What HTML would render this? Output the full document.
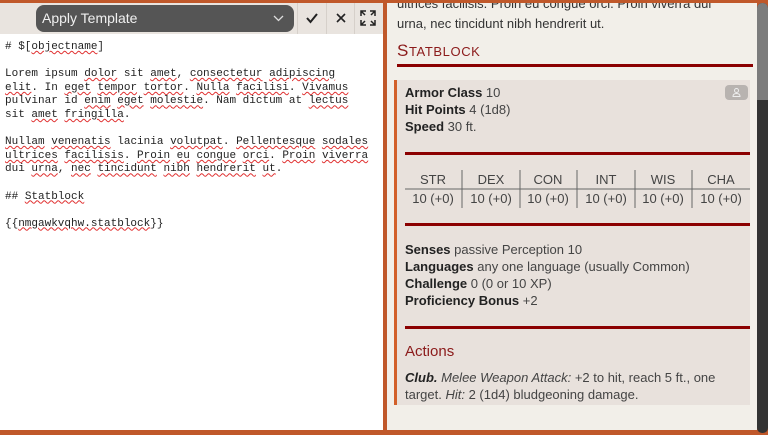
<!DOCTYPE html>
<html><head><meta charset="utf-8"><style>
*{margin:0;padding:0;box-sizing:border-box}
body{width:768px;height:435px;overflow:hidden;background:#c0582a;position:relative;font-family:"Liberation Sans",sans-serif}
.left{position:absolute;left:0;top:3px;width:383px;height:427px;background:#fff}
.tb{position:absolute;left:0;top:0;width:383px;height:31px;background:#e9e4df}
.sel{position:absolute;left:36px;top:2px;width:258px;height:27px;background:#555;border-radius:8px;color:#f0f0f0;font-size:14px;line-height:27px;padding-left:6px}
.btn{position:absolute;top:0;height:31px;width:28px;border-left:1px solid #d6d0ca}
.btn svg{position:absolute;left:7px;top:8px}
.code{position:absolute;left:5px;top:38px;font-family:"Liberation Mono",monospace;font-size:11px;line-height:13.6px;color:#222;white-space:pre}
.u{text-decoration:underline wavy #e03030;text-decoration-thickness:1px;text-underline-offset:1px}
.right{position:absolute;left:387px;top:3px;width:370px;height:427px;background:#f2efe9;overflow:hidden}
.sb{position:absolute;left:757px;top:3px;width:11px;height:430px;background:#333;border-radius:5px}
.sbt{position:absolute;left:757px;top:3px;width:11px;height:97px;background:#7c7c7c;border-radius:5px 5px 0 0}
.p{position:absolute;left:10px;color:#333;font-size:13px;line-height:17px}
.sc{position:absolute;left:394px;top:80px;width:356px;height:325px;background:#e8e1dc;border-left:3px solid #d2602a}
.red{position:absolute;height:3px;background:#8b0000}
.t{position:absolute;font-size:13px;color:#444;line-height:17px}
b{color:#222}
</style></head><body>
<div class="left">
 <div class="tb">
  <div class="sel">Apply Template<svg style="position:absolute;right:10px;top:10px" width="11" height="7"><path d="M1 1 L5.5 5.5 L10 1" fill="none" stroke="#ddd" stroke-width="1.3"/></svg></div>
  <div class="btn" style="left:297px"><svg width="14" height="14"><path d="M2 7 L5.5 11 L12 3" fill="none" stroke="#222" stroke-width="2"/></svg></div>
  <div class="btn" style="left:326px"><svg width="14" height="14"><path d="M3 3 L11 11 M11 3 L3 11" fill="none" stroke="#222" stroke-width="1.6"/></svg></div>
  <div class="btn" style="left:354px"><svg width="16" height="16" style="left:5px;top:7px"><g fill="none" stroke="#222" stroke-width="1.5"><path d="M1 6V1H6M1 1L5 5"/><path d="M10 1H15V6M15 1L11 5"/><path d="M1 10V15H6M1 15L5 11"/><path d="M15 10V15H10M15 15L11 11"/></g></svg></div>
 </div>
 <div class="code"># $[<span class="u">objectname</span>]

Lorem ipsum <span class="u">dolor</span> sit <span class="u">amet</span>, <span class="u">consectetur</span> <span class="u">adipiscing</span>
<span class="u">elit</span>. In <span class="u">eget</span> <span class="u">tempor</span> <span class="u">tortor</span>. <span class="u">Nulla</span> <span class="u">facilisi</span>. <span class="u">Vivamus</span>
pulvinar id <span class="u">enim</span> <span class="u">eget</span> <span class="u">molestie</span>. Nam dictum at <span class="u">lectus</span>
sit <span class="u">amet</span> <span class="u">fringilla</span>.

<span class="u">Nullam</span> <span class="u">venenatis</span> lacinia <span class="u">volutpat</span>. <span class="u">Pellentesque</span> <span class="u">sodales</span>
<span class="u">ultrices</span> <span class="u">facilisis</span>. <span class="u">Proin</span> <span class="u">eu</span> <span class="u">congue</span> <span class="u">orci</span>. <span class="u">Proin</span> <span class="u">viverra</span>
dui <span class="u">urna</span>, <span class="u">nec</span> <span class="u">tincidunt</span> <span class="u">nibh</span> <span class="u">hendrerit</span> <span class="u">ut</span>.

## <span class="u">Statblock</span>

{{<span class="u">nmgawkvqhw.statblock</span>}}</div>
</div>
<div class="right">
 <div class="p" style="top:-8px">ultrices facilisis. Proin eu congue orci. Proin viverra dui</div>
 <div class="p" style="top:12px">urna, nec tincidunt nibh hendrerit ut.</div>
 <div class="p" style="top:39px;color:#8b1a1a;font-size:17px;letter-spacing:0.6px">S<span style="font-size:13px">TATBLOCK</span></div>
 <div class="red" style="left:10px;top:61px;width:356px"></div>
</div>
<div class="sc">
 <div style="position:absolute;right:2px;top:5px;width:23px;height:15px;background:#b8b3b0;border-radius:4px"><svg width="23" height="15"><g fill="none" stroke="#eee" stroke-width="1"><circle cx="11.5" cy="5.5" r="2"/><path d="M8 11.5 Q8 8.5 11.5 8.5 Q15 8.5 15 11.5 Z"/></g></svg></div>
 <div class="t" style="left:8px;top:4px"><b>Armor Class</b> 10</div>
 <div class="t" style="left:8px;top:21px"><b>Hit Points</b> 4 (1d8)</div>
 <div class="t" style="left:8px;top:38px"><b>Speed</b> 30 ft.</div>
 <div class="red" style="left:8px;top:72px;width:345px"></div>
 <svg style="position:absolute;left:8px;top:90px" width="345" height="40">
  <g stroke="#666" stroke-width="1"><line x1="0" y1="19" x2="345" y2="19"/>
  <line x1="57" y1="0" x2="57" y2="38"/><line x1="115" y1="0" x2="115" y2="38"/><line x1="172" y1="0" x2="172" y2="38"/><line x1="230" y1="0" x2="230" y2="38"/><line x1="287" y1="0" x2="287" y2="38"/></g>
  <g font-family="Liberation Sans" font-size="13" fill="#444" text-anchor="middle">
  <text x="28" y="14">STR</text><text x="86" y="14">DEX</text><text x="143" y="14">CON</text><text x="201" y="14">INT</text><text x="258" y="14">WIS</text><text x="316" y="14">CHA</text>
  <text x="28" y="33">10 (+0)</text><text x="86" y="33">10 (+0)</text><text x="143" y="33">10 (+0)</text><text x="201" y="33">10 (+0)</text><text x="258" y="33">10 (+0)</text><text x="316" y="33">10 (+0)</text></g>
 </svg>
 <div class="red" style="left:8px;top:143px;width:345px"></div>
 <div class="t" style="left:8px;top:161px"><b>Senses</b> passive Perception 10</div>
 <div class="t" style="left:8px;top:178px"><b>Languages</b> any one language (usually Common)</div>
 <div class="t" style="left:8px;top:195px"><b>Challenge</b> 0 (0 or 10 XP)</div>
 <div class="t" style="left:8px;top:212px"><b>Proficiency Bonus</b> +2</div>
 <div class="red" style="left:8px;top:246px;width:345px"></div>
 <div class="t" style="left:8px;top:263px;font-size:15px;color:#8b1a1a">Actions</div>
 <div class="t" style="left:8px;top:289px;width:340px"><b><i>Club.</i></b> <i>Melee Weapon Attack:</i> +2 to hit, reach 5 ft., one target. <i>Hit:</i> 2 (1d4) bludgeoning damage.</div>
</div>
<div class="sb"></div><div class="sbt"></div>
</body></html>
